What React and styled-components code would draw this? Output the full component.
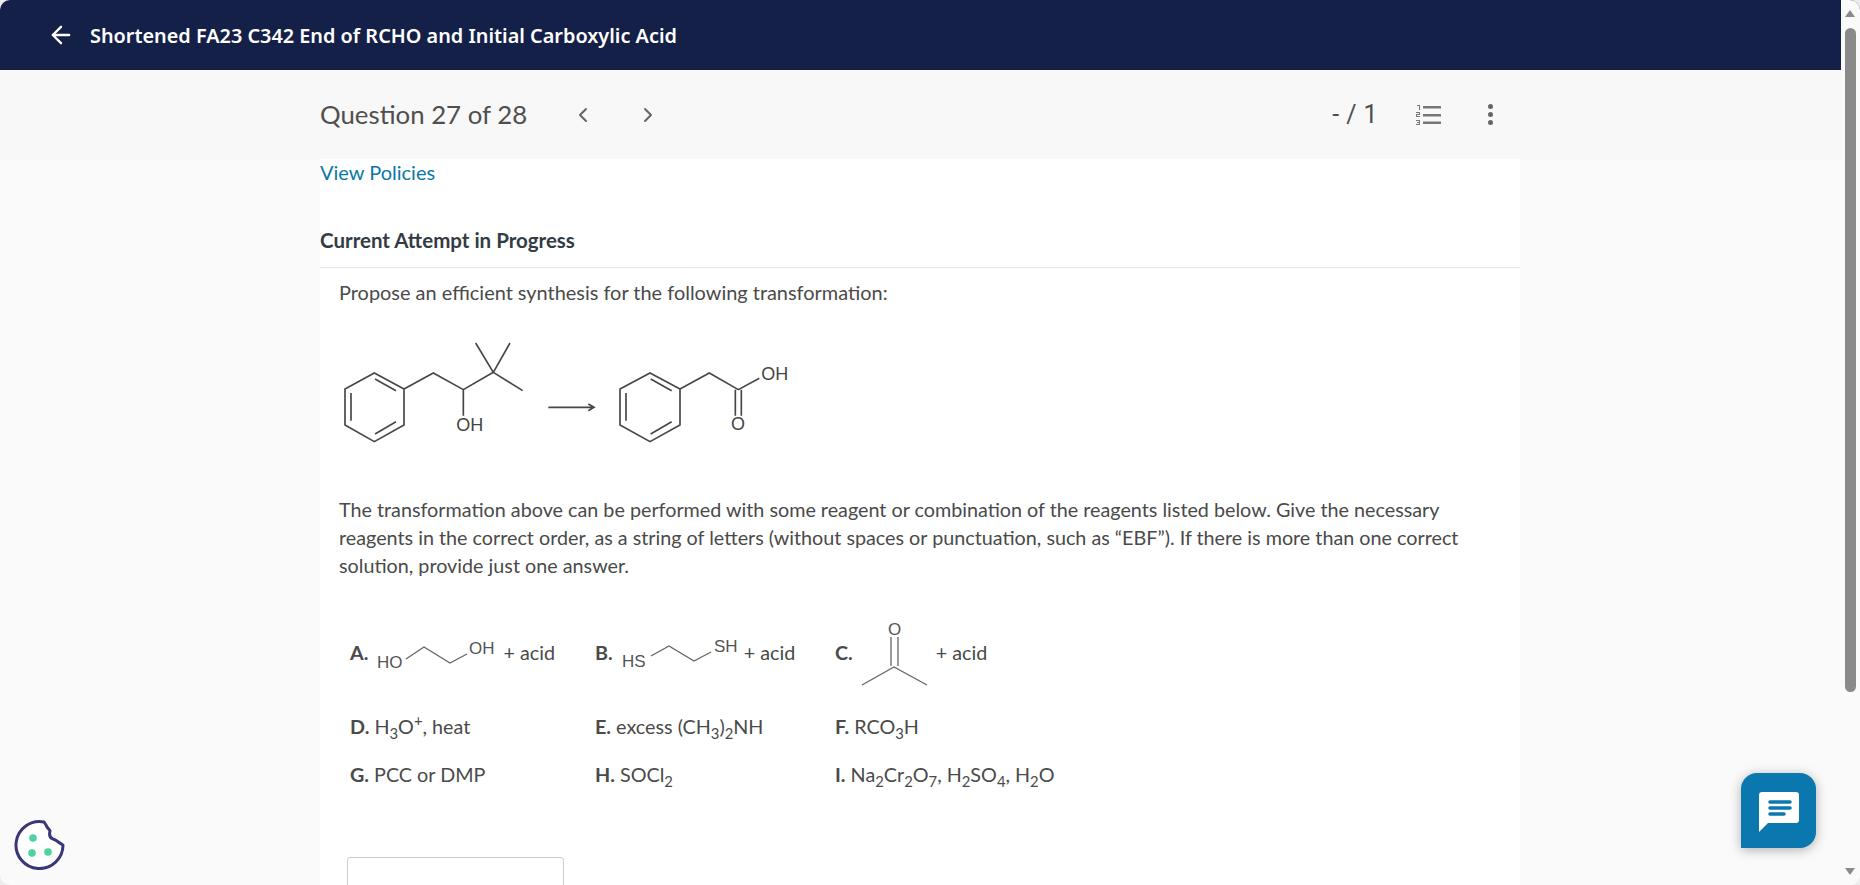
import React from "react";
import styled, { createGlobalStyle } from "styled-components";
import { ArrowLeft, ChevronLeft, ChevronRight } from "lucide-react";

const GlobalStyle = createGlobalStyle`
  html, body {
    margin: 0;
    height: 100%;
    overflow: hidden;
    background: #ececec;
  }
  body {
    font-family: "Lato", "Liberation Sans", sans-serif;
  }
`;

const Page = styled.div`
  height: 885px;
  overflow: hidden;
  background: #fafafa;
  border-radius: 10px;
  position: relative;
`;

const Header = styled.header`
  height: 70px;
  background: #142048;
  display: flex;
  align-items: center;
  padding-left: 47px;
  gap: 15px;
  color: #fff;
`;

const HeaderTitle = styled.h1`
  margin: 0;
  font-family: "Noto Sans", "Open Sans", sans-serif;
  font-size: 19.85px;
  font-weight: 600;
`;

const SubBar = styled.div`
  height: 89px;
  background: #f8f8f8;
  padding-left: 320px;
  display: flex;
`;

const SubBarInner = styled.div`
  width: 1200px;
  display: flex;
  align-items: center;
  color: #4f4f4f;
`;

const QuestionCount = styled.span`
  font-size: 25.8px;
  margin: -2px 44px 0 0;
`;

const NavButton = styled.button`
  width: 24px;
  height: 24px;
  padding: 0;
  margin-right: 41px;
  border: none;
  background: none;
  color: #666;
  display: flex;
  align-items: center;
  justify-content: center;
`;

const Score = styled.span`
  margin-left: auto;
  font-family: "Roboto", sans-serif;
  font-size: 25px;
  letter-spacing: 0.4px;
  margin-right: 38px;
`;

const MoreDots = styled.div`
  display: flex;
  flex-direction: column;
  gap: 3px;
  margin: 0 27px 0 47px;
`;

const Dot = styled.i`
  width: 5px;
  height: 5px;
  border-radius: 50%;
  background: #666;
`;

const Column = styled.main`
  width: 1200px;
  margin-left: 320px;
  background: #fff;
  color: #4a4a4a;
  font-size: 19.76px;
`;

const PolicyLink = styled.a`
  display: block;
  color: #0a78a8;
  font-size: 20px;
  line-height: 26px;
`;

const AttemptTitle = styled.h2`
  margin: 0;
  padding-top: 35px;
  height: 83px;
  box-sizing: border-box;
  font-size: 20.5px;
  font-weight: 700;
  line-height: 40px;
  color: #333b45;
  border-bottom: 1px solid #e6e6e6;
`;

const Body = styled.div`
  padding: 0 18px 0 19px;
`;

const Paragraph = styled.p`
  margin: 0;
  line-height: 28px;
`;

const Prompt = styled(Paragraph)`
  padding-top: 10px;
  font-size: 19.93px;
`;

const Scheme = styled.svg`
  display: block;
  margin: 13px 0 36px -19px;
`;

const Reagents = styled.div`
  display: grid;
  grid-template-columns: 245px 240px 1fr;
  padding: 30px 0 0 11px;
`;

const ImageReagent = styled.div`
  height: 84px;
  margin-bottom: 9px;
  display: flex;
  align-items: center;
  gap: 4px;
  white-space: nowrap;
`;

const ReagentLabel = styled.span`
  padding-top: 2px;
`;

const TextReagent = styled.div`
  height: 48px;
  line-height: 48px;
  white-space: nowrap;

  sub, sup {
    line-height: 0;
    font-size: 75%;
  }
`;

const Answer = styled.div`
  width: 217px;
  height: 60px;
  margin: 59px 0 0 8px;
  border: 1px solid #ccc;
  border-radius: 3px;
  box-sizing: border-box;
`;

const Scrollbar = styled.div`
  position: absolute;
  top: 0;
  right: 0;
  bottom: 0;
  width: 19px;
  background: #fafafa;
`;

const Thumb = styled.div`
  position: absolute;
  top: 28px;
  left: 4px;
  width: 11px;
  height: 664px;
  border-radius: 6px;
  background: #8a8a8a;
`;

const Arrow = styled.div`
  position: absolute;
  left: 4px;
  ${(p) => (p.$up ? "top: 10px;" : "bottom: 10px;")}
  width: 0;
  height: 0;
  border-left: 5.5px solid transparent;
  border-right: 5.5px solid transparent;
  ${(p) => (p.$up ? "border-bottom" : "border-top")}: 7px solid #8a8a8a;
`;

const ChatButton = styled.button`
  position: absolute;
  left: 1741px;
  top: 773px;
  width: 75px;
  height: 75px;
  padding: 3px 0 0;
  border: none;
  border-radius: 16px 16px 16px 0;
  background: #0a78ae;
  box-shadow: 0 2px 12px rgba(0, 0, 0, 0.3);
  display: flex;
  align-items: center;
  justify-content: center;
`;

const CookieButton = styled.div`
  position: absolute;
  left: 14px;
  bottom: 15px;
  width: 52px;
  height: 52px;
`;

const Bold = styled.b`
  font-weight: 700;
`;

const schemeBond = { fill: "none", stroke: "#474747", strokeWidth: 5 };
const schemeAtom = { fontFamily: "Liberation Sans", fontSize: 54, fill: "#444" };
const bond = { fill: "none", stroke: "#666", strokeWidth: 1.3 };
const atom = { fontFamily: "Liberation Sans", fontSize: 17, fill: "#555" };

// coordinates follow the drawing at 3x, the viewBox scales them back down
function ReactionScheme() {
  return (
    <Scheme width="520" height="140" viewBox="0 0 1560 420">
      <g {...schemeBond}>
        <path d="M75 210L163 162L252 210V318L163 368L75 318Z" />
        <path d="M93 222V305M165 180L228 215M165 345L228 308" />
        <path d="M252 210L340 162L430 212L520 160M430 212V290M520 160L467 72M520 160L570 72M520 160L608 215" />
        <path d="M685 265H822M805 255L822 265L805 275" />
        <path d="M900 210L990 162L1080 210V318L990 368L900 318Z" />
        <path d="M918 222V305M992 180L1055 215M992 345L1055 308" />
        <path d="M1080 210L1168 162L1255 212L1318 178M1246 212V290M1264 212V290" />
      </g>
      <text x="409" y="337" {...schemeAtom}>OH</text>
      <text x="1324" y="183" {...schemeAtom}>OH</text>
      <text x="1233" y="334" {...schemeAtom}>O</text>
    </Scheme>
  );
}

function Chain({ width, left, right, d, leftY, rightY }) {
  return (
    <svg width={width} height="60" viewBox={`0 0 ${width} 60`}>
      <path d={d} {...bond} />
      <text x="5" y={leftY} {...atom}>{left}</text>
      <text x="97" y={rightY} {...atom}>{right}</text>
    </svg>
  );
}

function Acetone() {
  return (
    <svg width="75" height="80" viewBox="0 0 75 80">
      <path d="M5 74L37 56L70 74M34 26V55M41 26V55" {...bond} />
      <text x="31" y="24" {...atom}>O</text>
    </svg>
  );
}

export default function App() {
  return (
    <>
      <GlobalStyle />
      <Page>
        <Header>
          <ArrowLeft size={28} strokeWidth={2} />
          <HeaderTitle>Shortened FA23 C342 End of RCHO and Initial Carboxylic Acid</HeaderTitle>
        </Header>
        <SubBar>
          <SubBarInner>
            <QuestionCount>Question 27 of 28</QuestionCount>
            <NavButton><ChevronLeft size={24} strokeWidth={2} /></NavButton>
            <NavButton><ChevronRight size={24} strokeWidth={2} /></NavButton>
            <Score>- / 1</Score>
            <svg width="25" height="22" viewBox="0 0 25 22" fill="#777">
              <path d="M7 2h18v2.5H7zM7 10h18v2.5H7zM7 17.5h18V20H7z" />
              <path d="M1 1h3v5H3V2H1zM0 8h4v3H1v1h3v1H0v-3h3V9H0zM0 16h4v5H0v-1h3v-1H1v-1h2v-1H0z" />
            </svg>
            <MoreDots><Dot /><Dot /><Dot /></MoreDots>
          </SubBarInner>
        </SubBar>
        <Column>
          <PolicyLink>View Policies</PolicyLink>
          <AttemptTitle>Current Attempt in Progress</AttemptTitle>
          <Body>
            <Prompt>Propose an efficient synthesis for the following transformation:</Prompt>
            <ReactionScheme />
            <Paragraph>
              The transformation above can be performed with some reagent or combination of the reagents listed below. Give the necessary reagents in the correct order, as a string of letters (without spaces or punctuation, such as “EBF”). If there is more than one correct solution, provide just one answer.
            </Paragraph>
            <Reagents>
              <ImageReagent>
                <ReagentLabel><Bold>A.</Bold></ReagentLabel>
                <Chain width={127} left="HO" right="OH" leftY={47} rightY={33} d="M34 38L52 26L78 42L95 33" />
                <ReagentLabel>+ acid</ReagentLabel>
              </ImageReagent>
              <ImageReagent>
                <ReagentLabel><Bold>B.</Bold></ReagentLabel>
                <Chain width={123} left="HS" right="SH" leftY={46} rightY={31} d="M34 35L52 25L77 40L94 31" />
                <ReagentLabel>+ acid</ReagentLabel>
              </ImageReagent>
              <ImageReagent>
                <ReagentLabel><Bold>C.</Bold></ReagentLabel>
                <Acetone />
                <ReagentLabel>+ acid</ReagentLabel>
              </ImageReagent>
              <TextReagent><Bold>D.</Bold> H<sub>3</sub>O<sup>+</sup>, heat</TextReagent>
              <TextReagent><Bold>E.</Bold> excess (CH<sub>3</sub>)<sub>2</sub>NH</TextReagent>
              <TextReagent><Bold>F.</Bold> RCO<sub>3</sub>H</TextReagent>
              <TextReagent><Bold>G.</Bold> PCC or DMP</TextReagent>
              <TextReagent><Bold>H.</Bold> SOCl<sub>2</sub></TextReagent>
              <TextReagent><Bold>I.</Bold> Na<sub>2</sub>Cr<sub>2</sub>O<sub>7</sub>, H<sub>2</sub>SO<sub>4</sub>, H<sub>2</sub>O</TextReagent>
            </Reagents>
            <Answer />
          </Body>
        </Column>
        <CookieButton>
          <svg width="52" height="52" viewBox="0 0 52 52">
            <path d="M30 4L32 7C33 10 35 11 36 13C35 17 36 20 39 21C43 22 45 25 49 27A23.5 23.5 0 1 1 30 4Z" fill="#fff" stroke="#3b3678" strokeWidth="3" strokeLinejoin="round" />
            <circle cx="19" cy="20" r="3.8" fill="#4ed39e" />
            <circle cx="18" cy="35" r="3.8" fill="#4ed39e" />
            <circle cx="34" cy="34" r="3.8" fill="#4ed39e" />
          </svg>
        </CookieButton>
        <ChatButton>
          <svg width="40" height="40" viewBox="0 0 40 40">
            <path d="M3 0H37a3 3 0 0 1 3 3V28a3 3 0 0 1-3 3H9L0 40V3a3 3 0 0 1 3-3z" fill="#fff" />
            <path d="M11 10H31M11 16H31M11 22H25" stroke="#0a78ae" strokeWidth="3.5" strokeLinecap="round" />
          </svg>
        </ChatButton>
        <Scrollbar>
          <Arrow $up />
          <Thumb />
          <Arrow />
        </Scrollbar>
      </Page>
    </>
  );
}
